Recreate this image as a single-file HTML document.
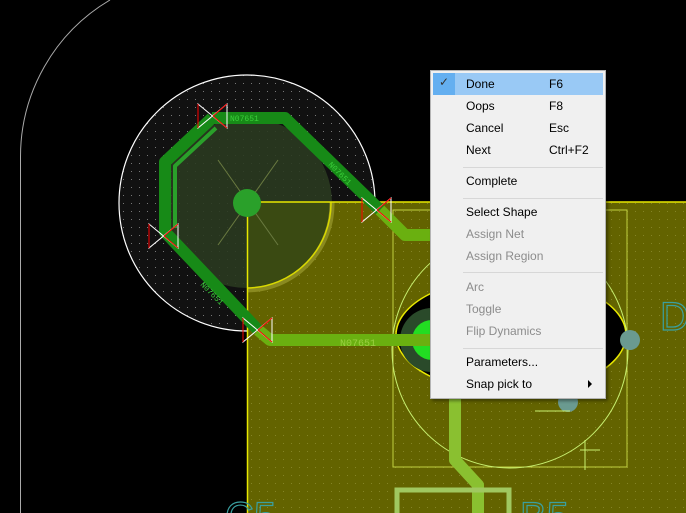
<!DOCTYPE html>
<html><head><style>
html,body{margin:0;padding:0;background:#000;width:686px;height:513px;overflow:hidden;position:relative;font-family:"Liberation Sans",sans-serif}
svg{position:absolute;left:0;top:0}
.menu{position:absolute;left:430px;top:70px;width:174px;height:327px;background:#f0f0f0;border:1px solid #b4b4b4;box-shadow:2px 2px 3px rgba(0,0,0,.4);font-size:12px;color:#000;overflow:hidden}
.it{position:absolute;left:35px;right:0;height:22px;line-height:22px;white-space:nowrap}
.k{position:absolute;left:83px;top:0}
.dis{color:#8c8c8c}
.sep{position:absolute;left:32px;width:140px;height:1px;background:#d7d7d7}
.hl{position:absolute;left:2px;top:2px;width:170px;height:22px;background:#99c9f5}
.ck{position:absolute;left:2px;top:2px;width:22px;height:22px;background:#64aff0}
</style></head><body>
<svg width="686" height="513" viewBox="0 0 686 513">
<defs>
<pattern id="dots" width="8" height="8" patternUnits="userSpaceOnUse"><rect x="3" y="3" width="1" height="1" fill="#777"/></pattern>
<pattern id="dots2" width="8" height="8" patternUnits="userSpaceOnUse"><rect x="3" y="3" width="1" height="1" fill="#9a9a40"/></pattern>
</defs>
<path d="M20.5,513 L20.5,157 A182,182 0 0 1 110,0" fill="none" stroke="#aaa" stroke-width="1"/>
<circle cx="247" cy="203" r="128" fill="#111"/>
<circle cx="247" cy="203" r="128" fill="url(#dots)"/>
<circle cx="247" cy="203" r="128" fill="none" stroke="#fff" stroke-width="1.2"/>
<rect x="247" y="202" width="440" height="312" fill="#636300"/>
<rect x="247" y="202" width="440" height="312" fill="url(#dots2)" opacity=".6"/>
<circle cx="247" cy="203" r="85" fill="#2a3a20" opacity=".9"/>
<path d="M247,202 L331,202 A85,85 0 0 1 247,288 Z" fill="#3a4a12"/>
<path d="M332,202 A86,86 0 0 1 247,290" fill="none" stroke="#8a8a20" stroke-width="5"/>
<path d="M331,202 A85,85 0 0 1 247,288" fill="none" stroke="#d8d800" stroke-width="1.5"/>
<line x1="247" y1="202" x2="686" y2="202" stroke="#e8e800" stroke-width="1.5"/>
<line x1="247.5" y1="202" x2="247.5" y2="513" stroke="#e8e800" stroke-width="1.5"/>
<line x1="218" y1="160" x2="278" y2="245" stroke="#6a7a40"/>
<line x1="278" y1="160" x2="218" y2="245" stroke="#6a7a40"/>
<circle cx="247" cy="203" r="14" fill="#2aa02a"/>
<rect x="393" y="210" width="234" height="257" fill="none" stroke="#c0d040"/>
<ellipse cx="511" cy="335" rx="115" ry="58" fill="#000" stroke="#e8e800" stroke-width="1.5"/>
<circle cx="432" cy="340" r="32" fill="#2a4a2a"/>
<circle cx="432" cy="340" r="20" fill="#22dd22"/>
<circle cx="510" cy="350" r="118" fill="none" stroke="#c8f070" stroke-width="1"/>
<circle cx="630" cy="340" r="10" fill="#6a9a90"/>
<circle cx="568" cy="402" r="10" fill="#6a9a90"/>
<path d="M580,450 L600,450 M585,440 L585,470 M535,411 L570,411" stroke="#c8f070"/>
<g fill="none" stroke-linejoin="round">
<path d="M212,118 L285,118 L380,210" stroke="#178a17" stroke-width="12"/>
<path d="M212,118 L165,162 L165,232 L258,330" stroke="#178a17" stroke-width="12"/>
<path d="M216,128 L175,166 L175,228" stroke="#2aa02a" stroke-width="4"/>
<path d="M380,210 L405,235 L440,235" stroke="#6ab010" stroke-width="12"/>
<path d="M258,330 L270,340 L440,340" stroke="#6ab010" stroke-width="12"/>
<path d="M455,395 L455,460 L478,485 L478,513" stroke="#8ac030" stroke-width="12"/>
</g>
<rect x="397" y="490" width="112" height="30" fill="none" stroke="#a0c860" stroke-width="5"/>
<g font-family="Liberation Mono,monospace" font-size="8" fill="#3ad03a">
<text x="230" y="121">N07651</text>
<text x="340" y="346" fill="#9ad040" font-size="10">N07651</text>
<text x="328" y="165" transform="rotate(45 328 165)">N07651</text>
<text x="200" y="285" transform="rotate(45 200 285)">N07651</text>
</g>
<g fill="none" stroke-width="1">
<g stroke="#fff"><path d="M198,104 L227,128 L227,104 L198,128 Z"/><path d="M149,224 L178,248 L178,224 L149,248 Z"/><path d="M362,198 L391,222 L391,198 L362,222 Z"/><path d="M243,318 L272,342 L272,318 L243,342 Z"/></g>
<g stroke="#f00"><path d="M198,104 L198,128 M213,116 L227,104 M213,116 L227,128"/><path d="M149,224 L149,248 M164,236 L178,224 M164,236 L178,248"/><path d="M362,198 L362,222 M377,210 L391,198 M377,210 L391,222"/><path d="M243,318 L243,342 M258,330 L272,318 M258,330 L272,342"/></g>
</g>
<g font-family="Liberation Sans,sans-serif" font-size="40" fill="none" stroke="#3aa0a0" stroke-width="1.2">
<text x="225" y="530">C5</text><text x="520" y="530">B5</text><text x="660" y="330">D</text>
</g>
</svg>
<div class="menu">
<div class="hl"></div><div class="ck"></div>
<div style="position:absolute;left:8px;top:4px;font-size:12px;color:#333">✓</div>
<div class="it" style="top:2px">Done<span class="k">F6</span></div>
<div class="it" style="top:24px">Oops<span class="k">F8</span></div>
<div class="it" style="top:46px">Cancel<span class="k">Esc</span></div>
<div class="it" style="top:68px">Next<span class="k">Ctrl+F2</span></div>
<div class="sep" style="top:96px"></div>
<div class="it" style="top:99px">Complete</div>
<div class="sep" style="top:127px"></div>
<div class="it" style="top:130px">Select Shape</div>
<div class="it dis" style="top:152px">Assign Net</div>
<div class="it dis" style="top:174px">Assign Region</div>
<div class="sep" style="top:201px"></div>
<div class="it dis" style="top:205px">Arc</div>
<div class="it dis" style="top:227px">Toggle</div>
<div class="it dis" style="top:249px">Flip Dynamics</div>
<div class="sep" style="top:277px"></div>
<div class="it" style="top:280px">Parameters...</div>
<div class="it" style="top:302px">Snap pick to</div>
<div style="position:absolute;left:157px;top:309px;width:0;height:0;border-left:4px solid #000;border-top:4px solid transparent;border-bottom:4px solid transparent"></div>
</div>
</body></html>
